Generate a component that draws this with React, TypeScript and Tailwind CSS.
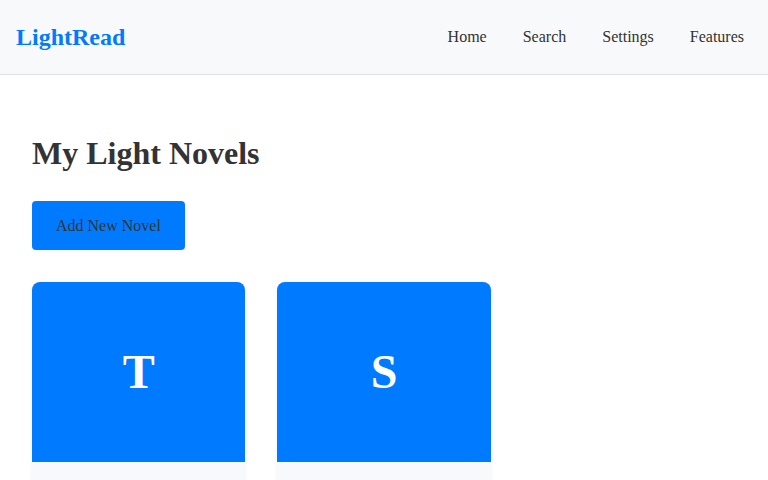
import React from 'react';

interface Novel {
  id: number;
  title: string;
  author: string;
}

const novels: Novel[] = [
  { id: 1, title: 'The Tale of the Moonlit Sword', author: 'Unknown' },
  { id: 2, title: 'Sky Between Worlds', author: 'Unknown' },
];

function NovelCard({ novel }: { novel: Novel }) {
  return (
    <div className="rounded-lg overflow-hidden bg-[#f8f9fa] shadow-[0_2px_4px_rgba(0,0,0,0.05)]">
      <div className="h-[180px] bg-[#007bff] flex items-center justify-center">
        <span className="text-white text-[48px] font-bold leading-none">{novel.title.charAt(0)}</span>
      </div>
      <div className="p-4">
        <h3 className="text-lg font-bold text-[#333]">{novel.title}</h3>
        <p className="text-sm text-[#666] mt-1">{novel.author}</p>
      </div>
    </div>
  );
}

export default function App() {
  return (
    <div className="min-h-screen bg-white text-[#333] font-['Liberation_Serif',serif]">
      {/* Header */}
      <header className="h-[75px] bg-[#f8f9fa] border-b border-[#dee2e6] flex items-center justify-between pl-4 pr-6">
        <div className="text-[24px] font-bold text-[#007bff]">LightRead</div>
        <nav className="flex gap-9 text-base text-[#333]">
          <a href="#">Home</a>
          <a href="#">Search</a>
          <a href="#">Settings</a>
          <a href="#">Features</a>
        </nav>
      </header>

      {/* Main */}
      <main className="px-8">
        <h1 className="text-[32px] font-bold leading-[37px] pt-[60px]">My Light Novels</h1>
        <button className="mt-[29px] h-[49px] px-6 bg-[#007bff] rounded text-base text-[#333]">
          Add New Novel
        </button>
        <div className="mt-8 grid grid-cols-3 gap-8">
          {novels.map((n) => (
            <NovelCard key={n.id} novel={n} />
          ))}
        </div>
      </main>
    </div>
  );
}
